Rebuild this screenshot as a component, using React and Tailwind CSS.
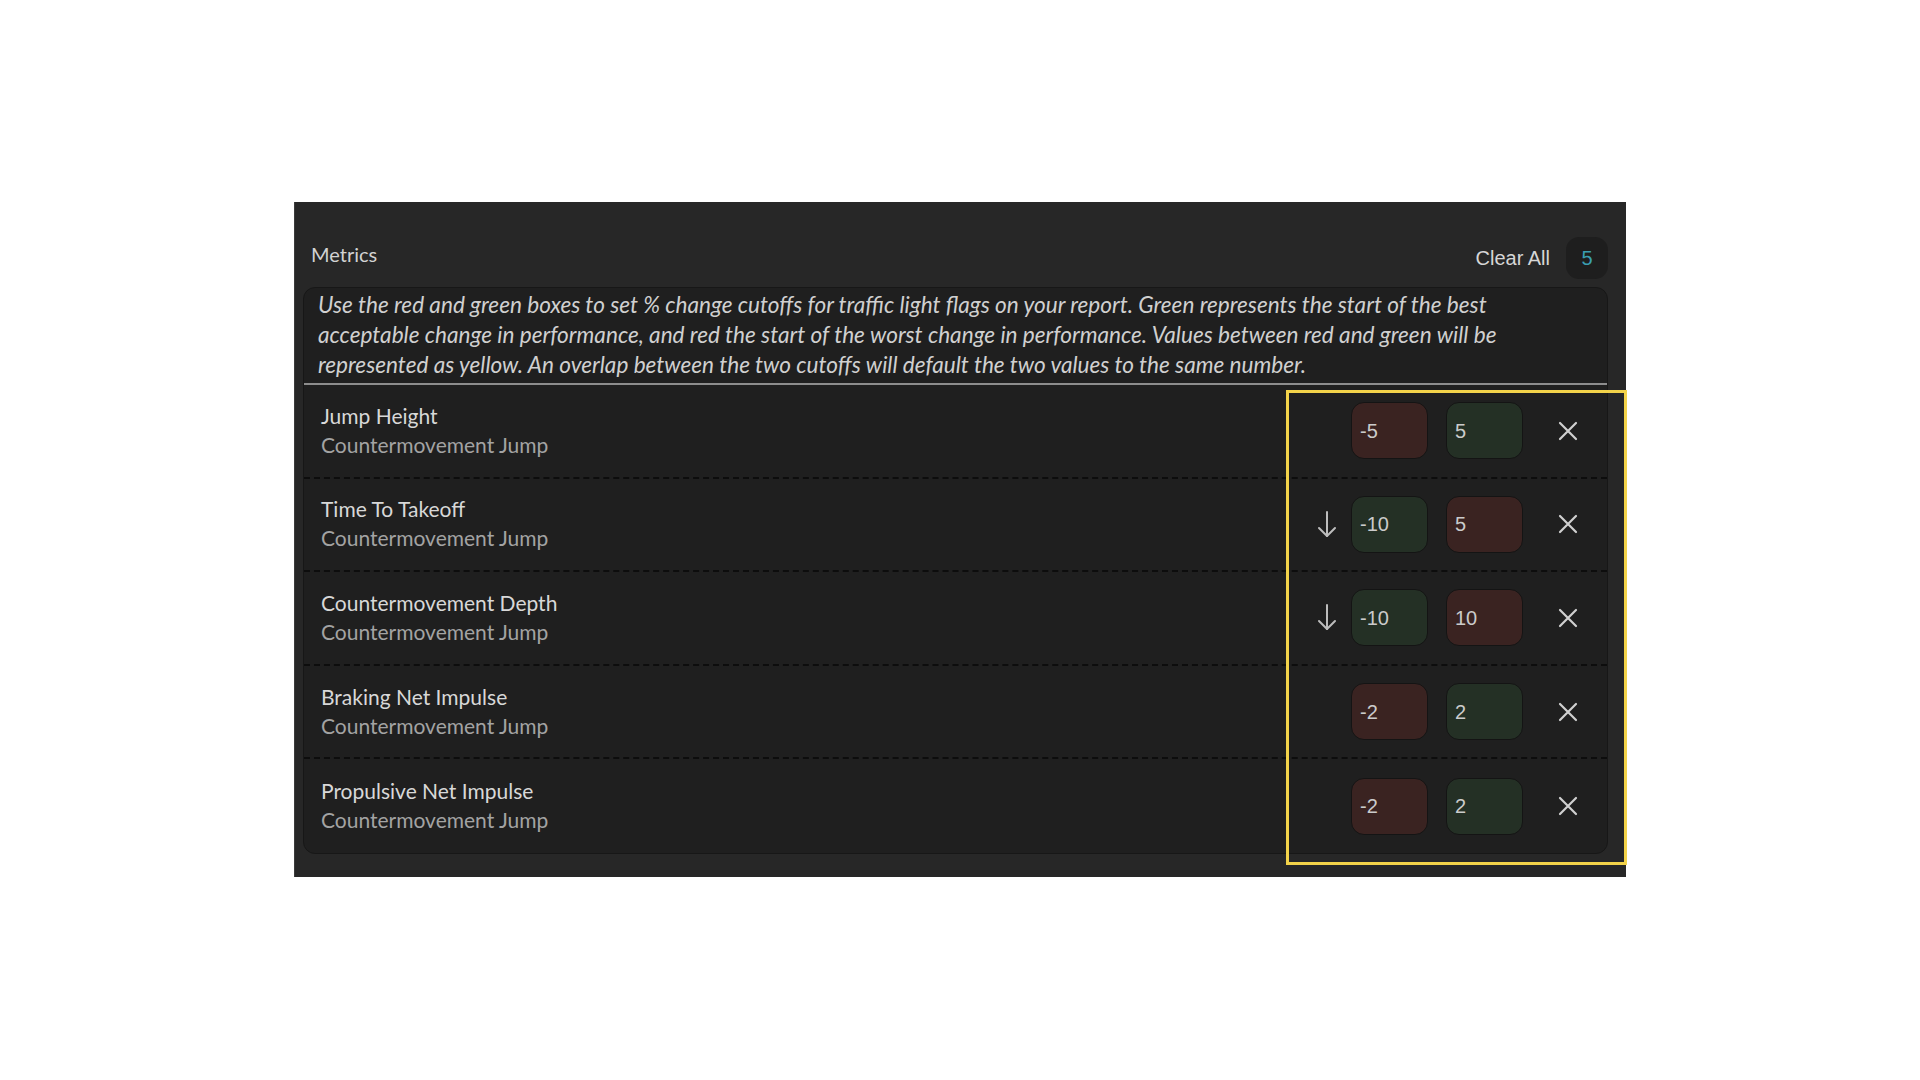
const metrics = [
  { name: "Jump Height", low: "-5", high: "5", lowTone: "red", highTone: "green", arrow: false },
  { name: "Time To Takeoff", low: "-10", high: "5", lowTone: "green", highTone: "red", arrow: true },
  { name: "Countermovement Depth", low: "-10", high: "10", lowTone: "green", highTone: "red", arrow: true },
  { name: "Braking Net Impulse", low: "-2", high: "2", lowTone: "red", highTone: "green", arrow: false },
  { name: "Propulsive Net Impulse", low: "-2", high: "2", lowTone: "red", highTone: "green", arrow: false },
];

function DownArrow() {
  return (
    <svg width="24" height="27" viewBox="0 0 24 27" fill="none" stroke="#bdbdbd" strokeWidth="2" strokeLinecap="round" strokeLinejoin="round">
      <path d="M12 1v24" />
      <path d="M4 17l8 8 8-8" />
    </svg>
  );
}

function CloseIcon() {
  return (
    <svg width="20" height="20" viewBox="0 0 20 20" fill="none" stroke="#d0d0d0" strokeWidth="2.2" strokeLinecap="round">
      <path d="M2 2l16 16M18 2L2 18" />
    </svg>
  );
}

function CutoffBox({ value, tone }) {
  return (
    <div
      className={`w-[77px] h-[57px] rounded-[13px] border border-[#141414] flex items-center pl-[8px] text-[20px] text-[#cbcbcb] font-['Liberation_Sans',Arial,sans-serif] ${
        tone === "red" ? "bg-[#3a2321]" : "bg-[#243025]"
      }`}
    >
      {value}
    </div>
  );
}

export default function App() {
  return (
    <div className="min-h-screen bg-white pt-[202px] pl-[294px] font-['Lato',sans-serif]">
      <div className="relative w-[1332px] bg-[#272727] border-l border-[#3c3c3c] pl-[8px] pr-[18px] pt-[35px] pb-[23px]">
        {/* Header */}
        <div className="flex items-center justify-between h-[42px] mb-[8px]">
          <div className="pl-[8px] mb-[8px] text-[20px] text-[#d2d2d2]">Metrics</div>
          <div className="flex items-center gap-[16px]">
            <button className="text-[20px] font-medium text-[#d6d6d6] font-['Liberation_Sans',Arial,sans-serif]">
              Clear All
            </button>
            <div className="w-[42px] h-[42px] rounded-[13px] bg-[#1e1e1e] flex items-center justify-center text-[20px] text-[#3a9fb2] font-['Liberation_Sans',Arial,sans-serif]">
              5
            </div>
          </div>
        </div>

        {/* Card */}
        <div className="rounded-[12px] border border-[#171717] bg-[#1f1f1f]">
          <p className="px-[14px] pt-[2px] pb-[3px] border-b-2 border-[#8d8d8d] italic text-[22.6px] leading-[30px] text-[#d0d0d0] whitespace-nowrap">
            Use the red and green boxes to set % change cutoffs for traffic light flags on your report. Green represents the start of the best
            <br />
            acceptable change in performance, and red the start of the worst change in performance. Values between red and green will be
            <br />
            represented as yellow. An overlap between the two cutoffs will default the two values to the same number.
          </p>

          {metrics.map((m, i) => (
            <div
              key={m.name}
              className={`h-[93.6px] flex items-center justify-between pl-[17px] pr-[29px] ${
                i < metrics.length - 1 ? "border-b-2 border-dashed border-[#0d0d0d]" : ""
              }`}
            >
              <div className="leading-[29px] -mt-[2px]">
                <div className="text-[21px] text-[#d8d8d8]">{m.name}</div>
                <div className="text-[21px] text-[#a3a3a3]">Countermovement Jump</div>
              </div>
              <div className="flex items-center">
                <div className="w-[24px] mr-[12px] flex justify-center">{m.arrow && <DownArrow />}</div>
                <CutoffBox value={m.low} tone={m.lowTone} />
                <div className="w-[18px]" />
                <CutoffBox value={m.high} tone={m.highTone} />
                <div className="ml-[35px]">
                  <CloseIcon />
                </div>
              </div>
            </div>
          ))}
        </div>

        {/* Highlight overlay */}
        <div className="absolute left-[991px] top-[188px] w-[341px] h-[475px] border-[3px] border-[#f3d34a] pointer-events-none" />
      </div>
    </div>
  );
}
